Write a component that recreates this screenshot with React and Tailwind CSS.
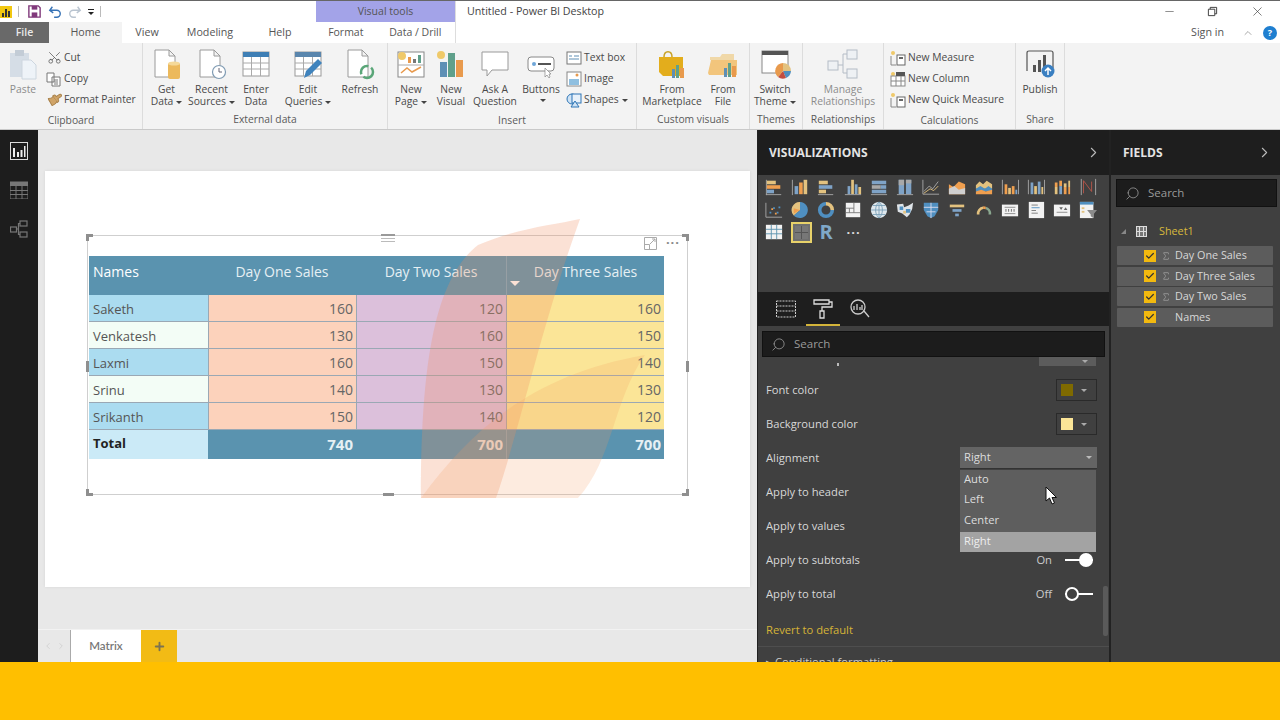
import React from "react";
import { Scissors, Paintbrush, ChevronRight, Search, Check, Minus, X, ChevronUp, Plus, ChevronLeft, Sigma } from "lucide-react";

const font = "font-['Open_Sans',sans-serif]";

const rows = [
  { name: "Saketh", a: 160, b: 120, c: 160, blue: true },
  { name: "Venkatesh", a: 130, b: 160, c: 150 },
  { name: "Laxmi", a: 160, b: 150, c: 140, blue: true },
  { name: "Srinu", a: 140, b: 130, c: 130 },
  { name: "Srikanth", a: 150, b: 140, c: 120, blue: true },
];

const settings = ["Font color", "Background color", "Alignment", "Apply to header", "Apply to values", "Apply to subtotals", "Apply to total"];

const fields = [
  { name: "Day One Sales", sum: true },
  { name: "Day Three Sales", sum: true },
  { name: "Day Two Sales", sum: true },
  { name: "Names" },
];

const O = "#ef9f4f", B = "#7fa3c7", T = "#e3c27f", G = "#a9a9a9", W = "#f2f2f2", N = "#4f8fc0";

// each visual icon is a list of [x, y, w, h, colour] rects, or a path string + colour
const vizIcons = [
  [[1, 2, 1, 17, G], [2, 3, 10, 4, T], [2, 8, 15, 4, O], [2, 13, 8, 4, B], [1, 18, 17, 1, G]],
  [[1, 2, 1, 17, G], [4, 9, 4, 9, B], [9, 5, 4, 13, O], [14, 2, 4, 16, T]],
  [[2, 3, 10, 4, T], [2, 8, 15, 4, B], [2, 13, 8, 4, T], [1, 18, 17, 1, G]],
  [[4, 9, 3, 9, B], [8, 2, 3, 16, T], [12, 7, 3, 11, B], [16, 10, 3, 8, T], [1, 18, 18, 1, G]],
  [[2, 3, 16, 4, B], [2, 8, 10, 4, G], [12, 8, 6, 4, B], [2, 13, 16, 4, B], [1, 18, 18, 1, G]],
  [[3, 2, 6, 16, B], [11, 2, 6, 16, B], [3, 2, 6, 6, G], [11, 2, 6, 4, G], [1, 18, 18, 1, G]],
  [["M1 2V18H19", G], ["M2 15L8 9L12 12L18 4", G], ["M2 17L9 12L13 14L18 9", T]],
  [["M1 18V7L6 10L12 4L19 7V18Z", O], ["M1 18V12L7 9L12 13L19 11V18Z", "#cfcfcf"]],
  [["M1 8L5 4L9 7L13 3L19 7V12H1Z", T], ["M1 12L6 9L11 12L15 9L19 12V15H1Z", N], ["M1 15L7 13L12 15L19 13V18H1Z", O]],
  [[1, 2, 1, 16, G], [19, 2, 1, 16, G], [4, 7, 3, 11, O], [8, 11, 3, 7, T], [12, 9, 3, 9, O], [16, 13, 2, 5, B]],
  [[1, 2, 1, 16, G], [19, 2, 1, 16, G], [4, 5, 3, 13, B], [8, 9, 3, 9, T], [12, 4, 3, 14, B], [16, 10, 2, 8, T]],
  [[2, 5, 3, 5, O], [2, 10, 3, 8, T], [7, 3, 3, 6, O], [7, 9, 3, 9, B], [12, 6, 3, 4, T], [12, 10, 3, 8, O], [17, 3, 2, 7, T], [17, 10, 2, 8, O]],
  [[2, 1, 1, 18, G], [18, 1, 1, 18, G], ["M5 17V3L14 15V4", "#b8564a"]],
  [["M1 2V18H19", G], ["M5 12h2v2H5zM9 7h2v2H9zM13 12h2v2h-2zM15 6h2v2h-2z", N], ["M7 8h2v2H7zM11 13h2v2h-2z", O]],
  [["M10 10V1A9 9 0 1 1 3 16Z", N], ["M10 10L3 16A9 9 0 0 1 10 1Z", T], ["M10 10L3 8L3 14Z", O]],
  [["M10 1A9 9 0 0 1 19 10H15A5 5 0 0 0 10 5Z", T], ["M19 10A9 9 0 1 1 10 1V5A5 5 0 1 0 15 10Z", N]],
  [[2, 2, 16, 16, W], ["M2 8H11M11 2V13M2 13H18M6 8V13", "#777"]],
  [["M10 1a9 9 0 1 0 .01 0Z", "#dfe8ee"], ["M1 10H19M10 1V19M3 5H17M3 15H17M10 1C5 5 5 15 10 19C15 15 15 5 10 1", "#7aa0b8"]],
  [["M1 4L8 3L9 7L14 5L19 2L18 9L15 15L12 18L7 14L2 12Z", "#dfe4e8"], ["M4 6L8 6L8 10L4 10ZM11 9H16V13H11Z", N], ["M8 11h3v3H8z", T]],
  [["M2 2H18V10L14 17L10 19L6 17L2 10Z", N], ["M2 7H18M5 12H15M10 2V19", "#dde"]],
  [[2, 4, 16, 3, T], [5, 9, 10, 3, B], [8, 14, 4, 3, B]],
  [["M2 15A8 8 0 0 1 9 6.1V9A5 5 0 0 0 5 15Z", T], ["M9 6A8 8 0 0 1 12 6.3V9.2A5 5 0 0 0 9 9Z", O], ["M12 6.3A8 8 0 0 1 18 15H15A5 5 0 0 0 12 9.2Z", "#8aa78f"]],
  [[1, 4, 18, 13, W], ["M4 7H16M4 14H16", "#888"], ["M5 9h1v3H5zM8 9h1v3H8zM11 9h1v3h-1zM14 9h1v3h-1z", "#666"]],
  [[2, 1, 17, 18, W], [5, 4, 7, 1, "#777"], [5, 7, 9, 1, N], [5, 10, 5, 1, "#777"], [5, 13, 7, 1, "#777"]],
  [[1, 4, 18, 13, W], ["M7 7H11L9 10ZM12 10L14 7L16 10Z", "#666"], [4, 12, 12, 1, "#888"]],
  [[1, 1, 15, 18, W], [1, 1, 15, 3, N], [3, 7, 3, 2, T], [3, 11, 3, 2, T], ["M9 10H20L16 15V19L13 17V15Z", "#8a8a8a"]],
];

function Viz({ parts }) {
  return (
    <svg viewBox="0 0 20 20" className="w-[18px] h-[18px]">
      {parts.map((p, i) =>
        typeof p[0] === "string" ? (
          p[0].endsWith("Z") || p[0].endsWith("z") ? (
            <path key={i} d={p[0]} fill={p[1]} />
          ) : (
            <path key={i} d={p[0]} fill="none" stroke={p[1]} strokeWidth="1" />
          )
        ) : (
          <rect key={i} x={p[0]} y={p[1]} width={p[2]} height={p[3]} fill={p[4]} />
        )
      )}
    </svg>
  );
}

const Doc = () => <path d="M4 2H18L24 8V29H4Z M18 2V8H24" fill="#fff" stroke="#9a9a9a" />;

const icons = {
  paste: (
    <svg viewBox="0 0 32 32" className="w-8 h-8">
      <rect x="3" y="5" width="19" height="24" fill="#d5dde6" />
      <rect x="8" y="2" width="9" height="6" fill="#c3ccd6" />
      <path d="M15 12H24L29 17V31H15Z" fill="#eef3f8" stroke="#cdd6df" />
    </svg>
  ),
  data: (
    <svg viewBox="0 0 32 32" className="w-8 h-8">
      <Doc />
      <rect x="17" y="15" width="12" height="16" rx="2" fill="#ecb95c" />
      <ellipse cx="23" cy="15.5" rx="6" ry="2" fill="#f5d999" />
    </svg>
  ),
  recent: (
    <svg viewBox="0 0 32 32" className="w-8 h-8">
      <Doc />
      <circle cx="23" cy="24" r="6.5" fill="#fff" stroke="#7f9bb3" strokeWidth="1.2" />
      <path d="M23 20V24H26" fill="none" stroke="#667" />
    </svg>
  ),
  enter: (
    <svg viewBox="0 0 32 32" className="w-8 h-8">
      <rect x="3" y="4" width="26" height="24" fill="#fff" stroke="#999" />
      <rect x="3" y="4" width="26" height="5" fill="#3f7fb5" />
      <path d="M3 15H29M3 21H29M11.5 9V28M20.5 9V28" stroke="#aaa" />
    </svg>
  ),
  edit: (
    <svg viewBox="0 0 32 32" className="w-8 h-8">
      <rect x="3" y="4" width="26" height="24" fill="#fff" stroke="#999" />
      <rect x="3" y="4" width="26" height="5" fill="#5a86ad" />
      <path d="M3 15H29M3 21H29M11.5 9V28M20.5 9V28" stroke="#aaa" />
      <path d="M12 30L14 23L26 11L30 15L18 27Z" fill="#3f83bd" />
    </svg>
  ),
  refresh: (
    <svg viewBox="0 0 32 32" className="w-8 h-8">
      <Doc />
      <circle cx="23" cy="24" r="6" fill="none" stroke="#5aa678" strokeWidth="2.5" strokeDasharray="13 3" />
    </svg>
  ),
  page: (
    <svg viewBox="0 0 32 32" className="w-8 h-8">
      <rect x="3" y="4" width="26" height="25" fill="#fff" stroke="#888" />
      <circle cx="7" cy="8" r="4" fill="#efc96a" />
      <rect x="13" y="9" width="3" height="6" fill="#e89a4d" />
      <rect x="18" y="11" width="3" height="4" fill="#777" />
      <rect x="23" y="7" width="3" height="8" fill="#5fa08b" />
      <path d="M6 25L12 20L17 24L26 19" fill="none" stroke="#e89a4d" strokeWidth="1.5" />
      <path d="M3 17H29" stroke="#aaa" />
    </svg>
  ),
  visual: (
    <svg viewBox="0 0 32 32" className="w-8 h-8">
      <circle cx="6" cy="7" r="4" fill="#efc96a" />
      <rect x="5" y="14" width="7" height="15" fill="#5e8fb5" />
      <rect x="13" y="5" width="7" height="24" fill="#5fa08b" />
      <rect x="21" y="12" width="7" height="17" fill="#e89a4d" />
    </svg>
  ),
  ask: (
    <svg viewBox="0 0 32 32" className="w-8 h-8">
      <path d="M3 4H29V22H13L8 28V22H3Z" fill="#fff" stroke="#999" />
    </svg>
  ),
  buttons: (
    <svg viewBox="0 0 32 32" className="w-8 h-8">
      <rect x="3" y="9" width="26" height="14" rx="3" fill="#fff" stroke="#888" />
      <circle cx="9" cy="16" r="2" fill="#6ea6d8" />
      <rect x="13" y="15" width="13" height="2" fill="#555" />
      <path d="M20 20V29L22 27L24 30L25 29L24 26H26Z" fill="#fff" stroke="#888" strokeWidth=".7" />
    </svg>
  ),
  market: (
    <svg viewBox="0 0 32 32" className="w-8 h-8">
      <path d="M8 9C8 2 16 2 16 9" fill="none" stroke="#c9a227" strokeWidth="1.5" />
      <path d="M3 9H27V28H7L3 24Z" fill="#e3ad1c" />
      <rect x="16" y="21" width="3" height="9" fill="#5e8fb5" />
      <rect x="20" y="17" width="3" height="13" fill="#5fa08b" />
      <rect x="24" y="20" width="4" height="10" fill="#e89a4d" />
    </svg>
  ),
  file: (
    <svg viewBox="0 0 32 32" className="w-8 h-8">
      <path d="M3 9H13L15 6H27V12H3Z" fill="#f0d8a8" />
      <path d="M1 25L4 12H30V27H2Z" fill="#f2c57c" />
      <rect x="17" y="20" width="3" height="9" fill="#5e8fb5" />
      <rect x="21" y="15" width="3" height="14" fill="#5fa08b" />
      <rect x="25" y="18" width="4" height="11" fill="#e89a4d" />
    </svg>
  ),
  theme: (
    <svg viewBox="0 0 32 32" className="w-8 h-8">
      <rect x="3" y="3" width="26" height="22" fill="#fff" stroke="#888" />
      <rect x="3" y="3" width="26" height="4" fill="#555" />
      <path d="M24 23V15A8 8 0 0 1 32 23Z" fill="#e3c27f" />
      <path d="M24 23H32A8 8 0 0 1 27 30Z" fill="#4f8fc0" />
      <path d="M24 23L27 30A8 8 0 0 1 19 29Z" fill="#c24d3f" />
      <path d="M24 23L19 29A8 8 0 0 1 24 15Z" fill="#e89a4d" />
    </svg>
  ),
  manage: (
    <svg viewBox="0 0 32 32" className="w-8 h-8">
      <g fill="#eef1f4" stroke="#b4bcc6">
        <rect x="1" y="13" width="10" height="9" />
        <rect x="20" y="2" width="10" height="9" />
        <rect x="20" y="21" width="10" height="9" />
      </g>
      <path d="M11 17H16M16 6V25M16 6H20M16 25H20" fill="none" stroke="#b4bcc6" />
    </svg>
  ),
  publish: (
    <svg viewBox="0 0 32 32" className="w-8 h-8">
      <path d="M3 23V5Q3 3 5 3H27Q29 3 29 5V20" fill="none" stroke="#555" strokeWidth="1.2" />
      <rect x="9" y="17" width="3" height="7" fill="#555" />
      <rect x="14" y="12" width="3" height="12" fill="#555" />
      <rect x="19" y="7" width="3" height="14" fill="#555" />
      <circle cx="24" cy="23" r="6.5" fill="#3a7fc1" />
      <path d="M24 27V20M21 23L24 20L27 23" fill="none" stroke="#fff" strokeWidth="1.5" />
    </svg>
  ),
};

const Mini = ({ children }) => (
  <svg viewBox="0 0 16 16" className="w-4 h-4 shrink-0">
    {children}
  </svg>
);

const smallIcons = {
  cut: <Scissors size={15} strokeWidth={1.2} className="text-[#555] -rotate-90 shrink-0" />,
  copy: (
    <Mini>
      <path d="M1 2H8V11H1ZM6 6H14V15H6Z" fill="#fff" stroke="#777" />
      <path d="M8 9H12M8 11H12M8 13H12" stroke="#777" />
    </Mini>
  ),
  painter: <Paintbrush size={15} strokeWidth={1.5} className="text-[#a8814a] shrink-0 rotate-[10deg]" fill="#d0a468" />,
  text: (
    <Mini>
      <rect x="1" y="2" width="14" height="12" fill="#fff" stroke="#777" />
      <path d="M3 6H6M8 6H13M3 9H13" stroke="#5e8fb5" />
    </Mini>
  ),
  image: (
    <Mini>
      <rect x="1" y="1" width="14" height="14" fill="#fff" stroke="#888" />
      <circle cx="11" cy="4" r="1.5" fill="#e89a4d" />
      <rect x="3" y="8" width="10" height="6" fill="#8fbfe0" />
    </Mini>
  ),
  shapes: (
    <Mini>
      <circle cx="6" cy="7" r="5" fill="#cfe3f5" stroke="#2e75b5" />
      <rect x="6" y="2" width="9" height="9" fill="#e8f1fa" stroke="#2e75b5" />
      <path d="M5 15L9 9L13 15Z" fill="#cfe3f5" stroke="#2e75b5" />
    </Mini>
  ),
  measure: (
    <Mini>
      <circle cx="3" cy="3" r="2" fill="#efc96a" />
      <path d="M1 6V15H6" fill="none" stroke="#888" />
      <rect x="7" y="5" width="8" height="10" fill="#fff" stroke="#666" />
      <rect x="9" y="7" width="4" height="2" fill="#666" />
    </Mini>
  ),
  column: (
    <Mini>
      <circle cx="3" cy="3" r="2" fill="#efc96a" />
      <rect x="1" y="5" width="14" height="10" fill="#fff" stroke="#888" />
      <rect x="6" y="1" width="9" height="4" fill="#555" />
      <path d="M1 10H15M6 5V15M11 5V15" stroke="#888" />
    </Mini>
  ),
};

const Caret = ({ className = "border-t-[#444]" }) => (
  <span className={`inline-block align-middle ml-[3px] w-0 h-0 border-x-[3px] border-x-transparent border-t-[3px] ${className}`} />
);

function Big({ w, icon, lines, caret, muted, caretBelow }) {
  return (
    <div className={`flex flex-col items-center shrink-0 leading-[12px] ${muted ? "text-[#8c8c8c]" : "text-[#4a4a4a]"}`} style={{ width: w }}>
      <div className="h-[34px] flex items-center justify-center mb-[2px]">{icon}</div>
      {lines.map((l, i) => (
        <div key={i} className="whitespace-nowrap">
          {l}
          {caret && i === lines.length - 1 && <Caret />}
        </div>
      ))}
      {caretBelow && <Caret className="border-t-[#444] mt-[4px] ml-0" />}
    </div>
  );
}

function Small({ items }) {
  return (
    <div className="flex flex-col shrink-0 text-[#4a4a4a]">
      {items.map((it) => (
        <div key={it.label} className="h-[21px] flex items-center gap-[2px] whitespace-nowrap">
          <span className="w-4 flex justify-center">{it.icon}</span>
          <span>
            {it.label}
            {it.caret && <Caret />}
          </span>
        </div>
      ))}
    </div>
  );
}

function Group({ w, label, children, pl = 0 }) {
  return (
    <div className="flex flex-col shrink-0 border-r border-[#dcdcdc] h-full" style={{ width: w }}>
      <div className="flex-1 flex items-start pt-[4px]" style={{ paddingLeft: pl }}>
        {children}
      </div>
      <div className="h-[20px] text-center text-[#5a5a5a] leading-[20px]">{label}</div>
    </div>
  );
}

function Ribbon() {
  return (
    <div className="h-[87px] bg-[#f3f3f3] flex text-[10.3px] border-b border-[#c9c9c9]">
      <Group w={143} label="Clipboard">
        <Big w={46} icon={icons.paste} lines={["Paste"]} muted />
        <Small
          items={[
            { label: "Cut", icon: smallIcons.cut },
            { label: "Copy", icon: smallIcons.copy },
            { label: "Format Painter", icon: smallIcons.painter },
          ]}
        />
      </Group>
      <Group w={245} label="External data" pl={1}>
        <Big w={45} icon={icons.data} lines={["Get", "Data"]} caret />
        <Big w={45} icon={icons.recent} lines={["Recent", "Sources"]} caret />
        <Big w={44} icon={icons.enter} lines={["Enter", "Data"]} />
        <Big w={60} icon={icons.edit} lines={["Edit", "Queries"]} caret />
        <Big w={44} icon={icons.refresh} lines={["Refresh"]} />
      </Group>
      <Group w={249} label="Insert" pl={3}>
        <Big w={40} icon={icons.page} lines={["New", "Page"]} caret />
        <Big w={40} icon={icons.visual} lines={["New", "Visual"]} />
        <Big w={48} icon={icons.ask} lines={["Ask A", "Question"]} />
        <Big w={44} icon={icons.buttons} lines={["Buttons"]} caretBelow />
        <div className="pl-[3px]">
          <Small
            items={[
              { label: "Text box", icon: smallIcons.text },
              { label: "Image", icon: smallIcons.image },
              { label: "Shapes", icon: smallIcons.shapes, caret: true },
            ]}
          />
        </div>
      </Group>
      <Group w={113} label="Custom visuals" pl={9}>
        <Big w={52} icon={icons.market} lines={["From", "Marketplace"]} />
        <Big w={50} icon={icons.file} lines={["From", "File"]} />
      </Group>
      <Group w={53} label="Themes" pl={0}>
        <Big w={50} icon={icons.theme} lines={["Switch", "Theme"]} caret />
      </Group>
      <Group w={81} label="Relationships">
        <Big w={80} icon={icons.manage} lines={["Manage", "Relationships"]} muted />
      </Group>
      <Group w={132} label="Calculations" pl={6}>
        <Small
          items={[
            { label: "New Measure", icon: smallIcons.measure },
            { label: "New Column", icon: smallIcons.column },
            { label: "New Quick Measure", icon: smallIcons.measure },
          ]}
        />
      </Group>
      <Group w={49} label="Share">
        <Big w={48} icon={icons.publish} lines={["Publish"]} />
      </Group>
    </div>
  );
}

function TitleArea() {
  return (
    <div className="h-[43px] flex bg-white border-t border-[#666] text-[#555] text-[10.7px]">
      <div className="w-[316px] flex flex-col shrink-0">
        <div className="h-[21px] flex items-center gap-[6px]">
          <svg viewBox="0 0 12 12" className="w-[12px] h-[12px]">
            <rect width="12" height="12" fill="#f2c811" />
            <path d="M2 11V7H4V11ZM5 11V3H7V11ZM8 11V5H10V11Z" fill="#333" />
          </svg>
          <span className="w-px h-[11px] bg-[#bbb]" />
          <svg viewBox="0 0 16 16" className="w-[15px] h-[15px] ml-[2px]">
            <path d="M2 2H12L14 4V14H2Z" fill="#fff" stroke="#80397b" strokeWidth="1.5" />
            <rect x="5" y="2" width="6" height="4" fill="#80397b" />
            <rect x="5" y="9" width="6" height="5" fill="#80397b" />
          </svg>
          <svg viewBox="0 0 16 16" className="w-[14px] h-[14px]">
            <path d="M5 2L2 6L6 9M2 6H10A4 4 0 0 1 10 14H7" fill="none" stroke="#3672b5" strokeWidth="1.6" />
          </svg>
          <svg viewBox="0 0 16 16" className="w-[14px] h-[14px]">
            <path d="M11 2L14 6L10 9M14 6H6A4 4 0 0 0 6 14H9" fill="none" stroke="#b9c4d0" strokeWidth="1.6" />
          </svg>
          <span className="flex flex-col items-center gap-[2px]">
            <span className="w-[6px] h-px bg-[#222]" />
            <span className="w-0 h-0 border-x-[3px] border-x-transparent border-t-[3px] border-t-[#222]" />
          </span>
          <span className="w-px h-[11px] bg-[#bbb]" />
        </div>
        <div className="flex-1 flex items-stretch text-[#555]">
          <div className="w-[49px] bg-[#696969] text-[#e8e8e8] flex items-center justify-center font-semibold text-[10.5px]">File</div>
          <div className="w-[73px] bg-[#f3f3f3] flex items-center justify-center">Home</div>
          <div className="w-[50px] flex items-center justify-center">View</div>
          <div className="w-[76px] flex items-center justify-center">Modeling</div>
          <div className="w-[64px] flex items-center justify-center">Help</div>
        </div>
      </div>
      <div className="w-[140px] flex flex-col shrink-0 border-r border-[#ddd]">
        <div className="h-[21px] bg-[#a3a3e8] text-[#555] flex items-center justify-center text-[10.5px]">Visual tools</div>
        <div className="flex-1 flex items-center text-[10.5px]">
          <span className="w-[60px] text-center">Format</span>
          <span className="w-[80px] text-center">Data / Drill</span>
        </div>
      </div>
      <div className="flex-1 flex flex-col">
        <div className="h-[21px] flex items-center pl-[11px]">
          <span className="flex-1 text-[#444]">Untitled - Power BI Desktop</span>
          <div className="flex items-center text-[#333]">
            <Minus size={13} strokeWidth={1} />
            <svg viewBox="0 0 12 12" className="w-[11px] h-[11px] ml-[31px]">
              <path d="M1.5 3.5H8.5V10.5H1.5ZM3.5 3.5V1.5H10.5V8.5H8.5" fill="none" stroke="#333" />
            </svg>
            <X size={15} strokeWidth={1} className="ml-[32px] mr-[15px]" />
          </div>
        </div>
        <div className="flex-1 flex items-center justify-end text-[#555]">
          <span>Sign in</span>
          <ChevronUp size={12} className="ml-[18px] text-[#aaa]" />
          <span className="ml-[9px] mr-[3px] w-[14px] h-[14px] rounded-full bg-[#1f7fd0] text-white text-[9px] font-bold flex items-center justify-center">?</span>
        </div>
      </div>
    </div>
  );
}

function Rail() {
  return (
    <div className="w-[38px] bg-[#1d1d1d] shrink-0 flex flex-col items-center pt-[12px] gap-[21px]">
      <svg viewBox="0 0 18 18" className="w-[18px] h-[18px]">
        <rect x=".5" y=".5" width="17" height="17" fill="none" stroke="#ddd" />
        <path d="M3 15V6H5V15ZM7 15V10H9V15ZM10.5 15V8H12.5V15ZM14 15V4H15.5V15Z" fill="#eee" />
      </svg>
      <svg viewBox="0 0 18 18" className="w-[18px] h-[18px]">
        <rect x="0" y="1" width="18" height="17" fill="none" stroke="#777" />
        <rect x="0" y="1" width="18" height="4" fill="#777" />
        <path d="M0 9.5H18M0 13.5H18M6 5V18M12 5V18" stroke="#777" />
      </svg>
      <svg viewBox="0 0 18 18" className="w-[18px] h-[18px]">
        <g fill="none" stroke="#777" strokeWidth="1.2">
          <rect x=".5" y="7" width="6" height="5" />
          <rect x="10" y="1" width="7" height="5" />
          <rect x="10" y="12" width="7" height="5" />
          <path d="M6.5 9H8.5V3.5H10M8.5 9V14.5H10" />
        </g>
      </svg>
    </div>
  );
}

const Handle = ({ className }) => <span className={`absolute bg-[#8f8f8f] ${className}`} />;

function Matrix() {
  const cell = "border-b border-l border-[#9aa8b4] flex items-center justify-end pr-[3px] text-[#666] text-[14px]";
  const total = "bg-[#5a93af] text-[#e6f0f4] font-bold text-[15px] flex items-center justify-end pr-[3px]";
  const head = "bg-[#5a93af] text-[#e6f0f4] flex items-center justify-center pb-[9px]";
  return (
    <div className="grid grid-cols-[119px_148px_150px_158px] text-[13px]">
      <div className="h-[39px] bg-[#5a93af] text-white text-[14px] flex items-center pl-[4px] pb-[9px]">Names</div>
      <div className={`${head} text-[14px]`}>Day One Sales</div>
      <div className={`${head} text-[14px]`}>Day Two Sales</div>
      <div className={`${head} text-[14px] relative border-l border-[#79a7bd]`}>
        Day Three Sales
        <span className="absolute left-[3px] top-[25px] w-0 h-0 border-x-[5px] border-x-transparent border-t-[5px] border-t-white" />
      </div>
      {rows.map((r) => (
        <React.Fragment key={r.name}>
          <div className={`h-[27px] flex items-center pl-[4px] pt-[3px] text-[#555] border-b border-[#9aa8b4] ${r.blue ? "bg-[#abdcf0]" : "bg-[#f3fdf6]"}`}>{r.name}</div>
          <div className={`${cell} bg-[#fcd2bb]`}>{r.a}</div>
          <div className={`${cell} bg-[#dcc0db]`}>{r.b}</div>
          <div className={`${cell} bg-[#fbe597]`}>{r.c}</div>
        </React.Fragment>
      ))}
      <div className="h-[29px] bg-[#cbeaf7] text-[#222] font-bold flex items-center pl-[4px] pb-[1px]">Total</div>
      <div className={total}>740</div>
      <div className={total}>700</div>
      <div className={`${total} border-l border-[#79a7bd]`}>700</div>
    </div>
  );
}

function Canvas() {
  return (
    <div className="relative w-[719px] shrink-0 bg-[#e8e8e8] flex flex-col">
      <div className="flex-1 pl-[7px] pt-[41px]">
        <div className="w-[705px] h-[416px] bg-white pl-[42px] pt-[64px] shadow-[0_0_3px_rgba(0,0,0,0.08)]">
          <div className="relative w-[601px] h-[260px] border border-[#cfcfcf] pt-[20px] pl-[1px]">
            <Matrix />
            {/* selection handles */}
            <Handle className="left-[-2px] top-[-2px] w-[7px] h-[3px]" />
            <Handle className="left-[-2px] top-[-2px] w-[3px] h-[7px]" />
            <Handle className="right-[-2px] top-[-2px] w-[7px] h-[3px]" />
            <Handle className="right-[-2px] top-[-2px] w-[3px] h-[7px]" />
            <Handle className="left-[-2px] bottom-[-2px] w-[7px] h-[3px]" />
            <Handle className="left-[-2px] bottom-[-2px] w-[3px] h-[7px]" />
            <Handle className="right-[-2px] bottom-[-2px] w-[7px] h-[3px]" />
            <Handle className="right-[-2px] bottom-[-2px] w-[3px] h-[7px]" />
            <Handle className="left-[-2px] top-[125px] w-[3px] h-[11px]" />
            <Handle className="right-[-2px] top-[125px] w-[3px] h-[11px]" />
            <Handle className="left-[295px] bottom-[-2px] w-[11px] h-[3px]" />
            <span className="absolute left-[293px] top-[-2px] w-[14px] flex flex-col gap-[2px]">
              <span className="h-[2px] bg-[#9a9a9a]" />
              <span className="h-px bg-[#bbb]" />
              <span className="h-px bg-[#bbb]" />
            </span>
            <svg viewBox="0 0 13 13" className="absolute right-[30px] top-[1px] w-[13px] h-[13px]">
              <path d="M.5 .5H12.5V12.5H.5ZM.5 7.5H5.5V12.5M6 7L11 2M8 2H11V5" fill="none" stroke="#aaa" />
            </svg>
            <span className="absolute right-[7px] top-[-3px] text-[#888] text-[13px] font-bold tracking-[1px]">···</span>
          </div>
        </div>
      </div>
      <div className="h-[33px] flex border-t border-[#f2f2f2] bg-[#e8e8e8] shrink-0">
        <div className="w-[33px] flex items-center justify-center gap-[3px] text-[#cfcfcf] border-r border-[#aaa]">
          <ChevronLeft size={10} />
          <ChevronRight size={10} />
        </div>
        <div className="w-[70px] bg-white text-[#777] text-[11.5px] font-['Lato',sans-serif] font-semibold flex items-center justify-center">Matrix</div>
        <div className="w-[36px] bg-[#f2bb15] flex items-center justify-center text-[#7c7350]">
          <Plus size={13} strokeWidth={3.5} />
        </div>
      </div>
      {/* watermark that lies over the report */}
      <svg className="absolute left-[370px] top-[80px] pointer-events-none" width="260" height="300" viewBox="0 0 260 300">
        <path d="M13 288C13 160 25 70 70 35C110 18 145 15 172 9C135 110 110 225 88 288Z" fill="#ee8a5e" opacity=".26" />
        <path d="M13 288C60 225 120 165 237 145C205 190 205 250 170 288Z" fill="#f49a5e" opacity=".2" />
      </svg>
    </div>
  );
}

const SearchBox = ({ className }) => (
  <div className={`bg-[#1c1c1c] border border-[#111] flex items-center pl-[8px] gap-[8px] text-[#9a9a9a] text-[11.5px] ${className}`}>
    <Search size={15} strokeWidth={1.3} className="-scale-x-100" />
    <span>Search</span>
  </div>
);

const Toggle = ({ on }) => (
  <div className="relative w-[28px] h-[14px] flex items-center">
    <span className="w-full h-[2px] bg-white" />
    <span className={`absolute top-0 w-[14px] h-[14px] rounded-full border-2 border-white ${on ? "right-0 bg-white" : "left-0 bg-[#404040]"}`} />
  </div>
);

const Swatch = ({ color }) => (
  <div className="w-[41px] h-[22px] border border-[#2a2a2a] flex items-center pl-[4px] gap-[8px]">
    <span className="w-[12px] h-[12px]" style={{ backgroundColor: color }} />
    <span className="w-0 h-0 border-x-[3px] border-x-transparent border-t-[3px] border-t-[#aaa]" />
  </div>
);

function SettingControl({ name }) {
  if (name === "Font color") return <Swatch color="#7f6a00" />;
  if (name === "Background color") return <Swatch color="#fbe597" />;
  if (name === "Alignment")
    return (
      <div className="relative">
        <div className="w-[137px] h-[22px] bg-[#646464] border-b border-[#333] flex items-center justify-between px-[4px] text-[#ddd]">
          <span>Right</span>
          <span className="w-0 h-0 mr-[1px] border-x-[3px] border-x-transparent border-t-[3px] border-t-[#bbb]" />
        </div>
        <div className="absolute z-10 left-0 top-[23px] w-[136px] bg-[#5e5e5e] text-[#ddd] rounded-b-[2px]">
          {["Auto", "Left", "Center"].map((o) => (
            <div key={o} className="h-[20.6px] flex items-center pl-[4px] pb-[2px]">{o}</div>
          ))}
          <div className="h-[20.6px] flex items-center pl-[4px] pb-[1px] bg-[#a3a3a3] text-[#eee]">Right</div>
        </div>
      </div>
    );
  if (name === "Apply to subtotals")
    return (
      <div className="flex items-center gap-[13px] pr-[4px] text-[#ccc]">
        <span>On</span>
        <Toggle on />
      </div>
    );
  if (name === "Apply to total")
    return (
      <div className="flex items-center gap-[13px] pr-[4px] text-[#ccc]">
        <span>Off</span>
        <Toggle />
      </div>
    );
  return null;
}

function Visualizations() {
  return (
    <div className="relative w-[354px] shrink-0 bg-[#404040] border-l border-[#222] border-r-2 border-r-[#222] flex flex-col text-[#d8d8d8] text-[11.2px] overflow-hidden">
      <div className="h-[45px] shrink-0 bg-[#1e1e1e] flex items-center justify-between pl-[11px] pr-[7px]">
        <span className="text-[12px] font-bold text-[#e4e4e4]">VISUALIZATIONS</span>
        <ChevronRight size={17} strokeWidth={1.5} className="text-[#bbb]" />
      </div>
      <div className="h-[117px] shrink-0 pl-[7px] pt-[1px]">
        <div className="grid grid-cols-[repeat(13,26.2px)] auto-rows-[22.5px]">
          {vizIcons.map((parts, i) => (
            <div key={i} className="flex items-center justify-start">
              <Viz parts={parts} />
            </div>
          ))}
          <div className="flex items-center justify-start">
            <Viz parts={[[1, 2, 18, 16, W], ["M1 7H19M1 12H19M7 2V18M13 2V18", "#5a93af"]]} />
          </div>
          <div className="flex items-center">
            <div className="w-[21px] h-[21px] border-2 border-[#e8d26a] bg-[#6f6f6f] flex items-center justify-center">
              <div className="w-[13px] h-[13px] grid grid-cols-2 gap-px bg-[#555]">
                <span className="bg-[#777]" /><span className="bg-[#777]" /><span className="bg-[#777]" /><span className="bg-[#777]" />
              </div>
            </div>
          </div>
          <div className="flex items-center text-[#7fa8c8] font-bold text-[20px] pl-[2px]">R</div>
          <div className="flex items-center text-[#ddd] font-bold text-[13px] tracking-[1px] pl-[3px]">···</div>
        </div>
      </div>
      <div className="h-[34px] shrink-0 bg-[#1e1e1e] flex items-center pl-[18px] gap-[17px]">
        <svg viewBox="0 0 20 18" className="w-[20px] h-[18px]">
          <path d="M.5 1H19.5V17H.5ZM.5 6H19.5M.5 11H19.5" fill="none" stroke="#ccc" strokeDasharray="2 1" />
        </svg>
        <div className="relative">
          <svg viewBox="0 0 20 20" className="w-[20px] h-[20px]">
            <path d="M1 1H16V5H1ZM16 3H19V8H9V12M7 12H11V19H7Z" fill="none" stroke="#ddd" strokeWidth="1.3" />
          </svg>
          <span className="absolute left-[-7px] top-[25px] w-[34px] h-[2px] bg-[#d4b43a]" />
        </div>
        <svg viewBox="0 0 20 20" className="w-[20px] h-[20px]">
          <circle cx="8" cy="8" r="7" fill="none" stroke="#ccc" strokeWidth="1.3" />
          <path d="M4 11V7M7 11V5M10 11V8M12 11V6M14 12L19 18" fill="none" stroke="#ccc" strokeWidth="1.3" />
        </svg>
      </div>
      <div className="px-[4px] pt-[5px] shrink-0">
        <SearchBox className="h-[26px]" />
      </div>
      <div className="flex justify-between pl-[79px] pr-[13px] h-[9px] shrink-0 items-end">
        <span className="w-[2px] h-[3px] bg-[#bbb]" />
        <span className="w-[57px] h-[9px] bg-[#5c5c5c] flex justify-end items-center pr-[8px]">
          <span className="w-0 h-0 border-x-[3px] border-x-transparent border-t-[3px] border-t-[#aaa]" />
        </span>
      </div>
      <div className="flex flex-col pl-[8px] pr-[12px] pt-[7px]">
        {settings.map((s) => (
          <div key={s} className="h-[34px] flex items-center justify-between">
            <span>{s}</span>
            <SettingControl name={s} />
          </div>
        ))}
      </div>
      <div className="pl-[8px] h-[33px] flex items-center border-b border-[#4e4e4e] text-[#d6b437] shrink-0 mt-[3px]">Revert to default</div>
      <div className="pl-[8px] pt-[7px] text-[#ccc]">▸ Conditional formatting</div>
      <span className="absolute right-[1px] top-[456px] w-[5px] h-[50px] bg-[#5a5a5a] rounded-[2px]" />
      {/* mouse pointer */}
      <svg viewBox="0 0 12 20" className="absolute z-20 left-[287px] top-[356px] w-[12px] h-[20px]">
        <path d="M1 1V15L4.5 12L7 18L9.5 17L7 11.5H11.5Z" fill="#fff" stroke="#111" strokeWidth="1" />
      </svg>
    </div>
  );
}

function Fields() {
  return (
    <div className="flex-1 bg-[#404040] flex flex-col text-[#d8d8d8] text-[10.8px]">
      <div className="h-[45px] shrink-0 bg-[#1e1e1e] flex items-center justify-between pl-[12px] pr-[7px]">
        <span className="text-[12px] font-bold text-[#e4e4e4]">FIELDS</span>
        <ChevronRight size={17} strokeWidth={1.5} className="text-[#bbb]" />
      </div>
      <div className="px-[5px] pt-[4px] pr-[3px]">
        <SearchBox className="h-[28px]" />
      </div>
      <div className="h-[39px] flex items-center pl-[10px] pt-[9px]">
        <span className="w-0 h-0 border-l-[5px] border-l-transparent border-b-[5px] border-b-[#888]" />
        <span className="ml-[10px] w-[11px] h-[11px] bg-[#ddd] grid grid-cols-3 gap-px p-px">
          {[0, 1, 2, 3, 4, 5].map((i) => (
            <span key={i} className="bg-[#777]" />
          ))}
        </span>
        <span className="ml-[12px] text-[#d8b93c]">Sheet1</span>
      </div>
      <div className="flex flex-col gap-[1.5px] pl-[6px] pr-[7px]">
        {fields.map((f) => (
          <div key={f.name} className="h-[19px] bg-[#5c5c5c] rounded-[1px] flex items-center pl-[27px]">
            <span className="w-[12px] h-[12px] bg-[#f2b90f] flex items-center justify-center">
              <Check size={10} strokeWidth={3} className="text-[#333]" />
            </span>
            <span className="w-[20px] flex justify-center">{f.sum && <Sigma size={10} className="text-[#999]" />}</span>
            <span className="ml-[-1px]">{f.name}</span>
          </div>
        ))}
      </div>
    </div>
  );
}

export default function App() {
  return (
    <div className={`w-[1280px] h-[720px] flex flex-col overflow-hidden bg-white ${font}`}>
      <TitleArea />
      <Ribbon />
      <div className="h-[532px] flex min-h-0">
        <Rail />
        <Canvas />
        <Visualizations />
        <Fields />
      </div>
      <div className="flex-1 bg-[#ffbf00]" />
    </div>
  );
}
